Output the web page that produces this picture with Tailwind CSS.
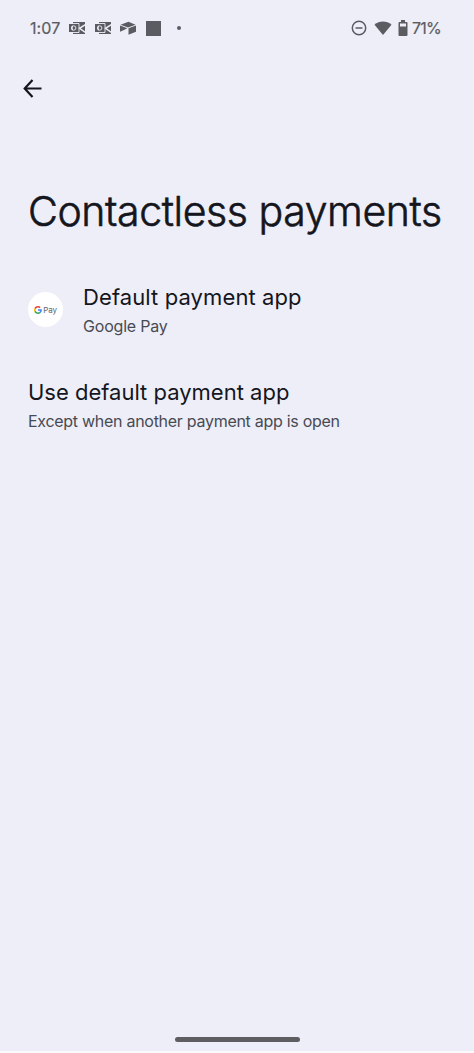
<!DOCTYPE html>
<html lang="en">
<head>
<meta charset="utf-8">
<title>Contactless payments</title>
<script src="https://cdn.jsdelivr.net/npm/@tailwindcss/browser@4"></script>
</head>
<body class="bg-[#eeeef8]">
<div class="flex flex-col w-[474px] h-[1053px] overflow-hidden bg-[#eeeef8] border-b-2 border-[#fafafd] font-['Inter',sans-serif] text-[#15161d]">
  <header class="flex items-center h-14 pl-[30px] pr-[33px] text-[#5b5c62] shrink-0">
    <span class="w-[39px] text-[16px] leading-none whitespace-nowrap tracking-[0.1px] [-webkit-text-stroke:0.2px]">1:07</span>
    <svg class="w-4 h-4" viewBox="0 0 16 16" fill="currentColor"><path d="M4 2h12v12H4z"/><path d="M16.500 4.500 10.500 8.300 16.500 12.500" fill="none" stroke="#eeeef8" stroke-width="1.500"/><path fill-rule="evenodd" d="M0 4h9.500v8H0zM4.700 5.500a2.500 2.500 0 1 0 0 5 2.500 2.500 0 0 0 0-5zm0 1.300a1.200 1.200 0 1 1 0 2.400 1.200 1.200 0 0 1 0-2.400z"/><path fill="none" stroke="#eeeef8" stroke-width=".9" d="M3 3.500h7v9H3M4.700 5.800a2.200 2.200 0 1 0 0 4.400 2.200 2.200 0 0 0 0-4.400z"/></svg>
    <svg class="w-4 h-4 ml-[10px]" viewBox="0 0 16 16" fill="currentColor"><path d="M4 2h12v12H4z"/><path d="M16.500 4.500 10.500 8.300 16.500 12.500" fill="none" stroke="#eeeef8" stroke-width="1.500"/><path fill-rule="evenodd" d="M0 4h9.500v8H0zM4.700 5.500a2.500 2.500 0 1 0 0 5 2.500 2.500 0 0 0 0-5zm0 1.300a1.200 1.200 0 1 1 0 2.400 1.200 1.200 0 0 1 0-2.400z"/><path fill="none" stroke="#eeeef8" stroke-width=".9" d="M3 3.500h7v9H3M4.700 5.800a2.200 2.200 0 1 0 0 4.400 2.200 2.200 0 0 0 0-4.400z"/></svg>
    <svg class="w-4 h-4 ml-[9px]" viewBox="0 0 16 16" fill="currentColor"><path d="M.5 4.800 8.500 1.700l7 3L8 7.500zM8.500 8.300 16 5.600v6.200l-7.500 2.900zM0 5.500 7.300 8.300 3.500 10.300 0 11.800z"/></svg>
    <span class="w-[15px] h-[15px] ml-[10px] bg-current"></span>
    <span class="w-1 h-1 ml-4 rounded-full bg-current"></span>
    <svg class="w-4 h-4 ml-auto" viewBox="0 0 16 16" fill="none" stroke="currentColor" stroke-width="1.500"><circle cx="8" cy="8" r="6.700"/><path d="M4.500 8h7"/></svg>
    <svg class="w-[18px] h-[14px] ml-[7px]" viewBox="0 0 18 14" fill="currentColor"><path d="M9 14 .5 3.800C5.300-.6 12.700-.6 17.500 3.800z"/></svg>
    <svg class="w-[10px] h-4 ml-[6px]" viewBox="0 0 10 16" fill="currentColor"><path fill-rule="evenodd" d="M3 0h4v2h1.500q1 0 1 1v12q0 1-1 1h-7q-1 0-1-1V3q0-1 1-1H3zM2 3.500V6.500h6V3.500z"/></svg>
    <span class="w-[29px] ml-1 text-[16px] leading-none whitespace-nowrap tracking-[-0.8px] [-webkit-text-stroke:0.2px]">71%</span>
  </header>
  <nav class="flex h-[64px] items-center pl-[23px] shrink-0">
    <svg class="w-[19px] h-[19px]" viewBox="0 0 19 19" fill="none" stroke="currentColor" stroke-width="2.200"><path d="M9.500 1 1.700 9.500 9.500 18M1.700 9.500H18.500"/></svg>
  </nav>
  <main class="flex flex-col pt-[65px] pl-7">
    <h1 class="text-[41px] leading-[52px] font-light tracking-[-0.42px] [-webkit-text-stroke:0.6px] whitespace-nowrap">Contactless payments</h1>
    <section class="flex items-center mt-[45px] h-[56px]">
      <div class="flex items-center justify-center w-[35px] h-[35px] rounded-full bg-white shrink-0 gap-px -mt-px">
        <svg class="w-[8px] h-[8px]" viewBox="0 0 48 48"><path fill="#EA4335" d="M24 9.500c3.500 0 6.700 1.200 9.200 3.600l6.900-6.900C35.900 2.400 30.500 0 24 0 14.600 0 6.500 5.400 2.600 13.200l8 6.200C12.400 13.700 17.700 9.500 24 9.500z"/><path fill="#4285F4" d="M47 24.500c0-1.600-.2-3.100-.4-4.500H24v9h12.900c-.6 3-2.200 5.500-4.700 7.200l7.700 6C44.400 38 47 32 47 24.500z"/><path fill="#FBBC05" d="M10.500 28.600a14.500 14.500 0 0 1 0-9.200l-8-6.200a24 24 0 0 0 0 21.600z"/><path fill="#34A853" d="M24 48c6.500 0 12-2.100 15.900-5.800l-7.700-6c-2.200 1.500-4.900 2.300-8.200 2.300-6.300 0-11.600-4.200-13.500-9.900l-8 6.200C6.500 42.600 14.600 48 24 48z"/></svg>
        <span class="text-[8px] leading-none text-[#5f6368] tracking-[-0.2px]">Pay</span>
      </div>
      <div class="flex flex-col ml-5">
        <span class="text-[22px] leading-7 tracking-[0.1px] whitespace-nowrap mt-px">Default payment app</span>
        <span class="text-[16px] leading-6 mt-[3px] tracking-[-0.2px] whitespace-nowrap text-[#484a53]">Google Pay</span>
      </div>
    </section>
    <section class="flex flex-col mt-10">
      <span class="text-[22px] leading-7 whitespace-nowrap">Use default payment app</span>
      <span class="text-[16px] leading-6 mt-[3px] tracking-[-0.28px] whitespace-nowrap text-[#484a53]">Except when another payment app is open</span>
    </section>
  </main>
  <div class="w-[125px] h-[5px] mt-auto mb-[9px] mx-auto rounded-full bg-[#5e5e62] shrink-0"></div>
</div>
</body>
</html>
